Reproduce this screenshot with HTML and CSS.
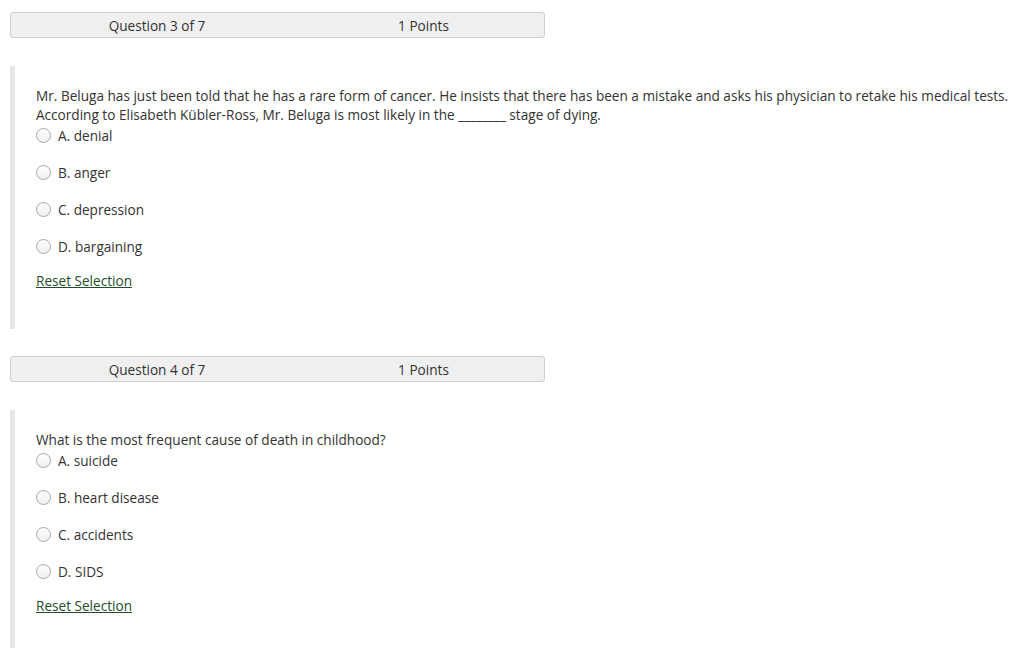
FILE: index.html
```html
<!DOCTYPE html>
<html>
<head>
<meta charset="utf-8">
<link rel="stylesheet" href="styles.css">
</head>
<body>
<div class="page">
  <div class="q-header">
    <div class="q-num">Question 3 of 7</div>
    <div class="q-pts">1 Points</div>
  </div>
  <div class="q-body">
    <div class="q-text">Mr. Beluga has just been told that he has a rare form of cancer. He insists that there has been a mistake and asks his physician to retake his medical tests. According to Elisabeth Kübler-Ross, Mr. Beluga is most likely in the ________ stage of dying.</div>
    <div class="options">
      <label class="opt"><span class="radio"></span>A. denial</label>
      <label class="opt"><span class="radio"></span>B. anger</label>
      <label class="opt"><span class="radio"></span>C. depression</label>
      <label class="opt"><span class="radio"></span>D. bargaining</label>
    </div>
    <a class="reset" href="#">Reset Selection</a>
  </div>

  <div class="q-header">
    <div class="q-num">Question 4 of 7</div>
    <div class="q-pts">1 Points</div>
  </div>
  <div class="q-body">
    <div class="q-text">What is the most frequent cause of death in childhood?</div>
    <div class="options">
      <label class="opt"><span class="radio"></span>A. suicide</label>
      <label class="opt"><span class="radio"></span>B. heart disease</label>
      <label class="opt"><span class="radio"></span>C. accidents</label>
      <label class="opt"><span class="radio"></span>D. SIDS</label>
    </div>
    <a class="reset" href="#">Reset Selection</a>
  </div>
</div>
</body>
</html>
```

FILE: styles.css
```css
html, body {
  margin: 0;
  padding: 0;
  background: #fff;
  height: 648px;
  overflow: hidden;
}
body {
  font-family: "Open Sans", "DejaVu Sans", sans-serif;
  font-size: 13.6px;
  line-height: 19px;
  color: #333;
}
.page {
  padding: 12px 0 0 10px;
}
.q-header {
  width: 533px;
  height: 24px;
  border: 1px solid #cfcfcf;
  border-radius: 3px;
  background: #efefef;
  display: flex;
  align-items: center;
}
.q-num {
  width: 292px;
  text-align: center;
}
.q-pts {
  flex: 1;
  text-align: center;
}
.q-body {
  margin-top: 28px;
  margin-bottom: 27px;
  border-left: 5px solid #e6e6e6;
  padding: 20px 0 39px 21px;
}
.q-text {
  margin: 0;
}
.options {
  display: flex;
  flex-direction: column;
  gap: 18px;
  margin-top: 2px;
}
.opt {
  display: flex;
  align-items: center;
  gap: 7px;
  height: 19px;
}
.radio {
  width: 13px;
  height: 13px;
  border: 1px solid #a8a8a8;
  border-radius: 50%;
  background: linear-gradient(#fdfdfd, #f0f0f0);
  flex: none;
}
.reset {
  display: inline-block;
  margin-top: 15px;
  color: #1f4d2a;
  text-decoration: underline;
}
```
